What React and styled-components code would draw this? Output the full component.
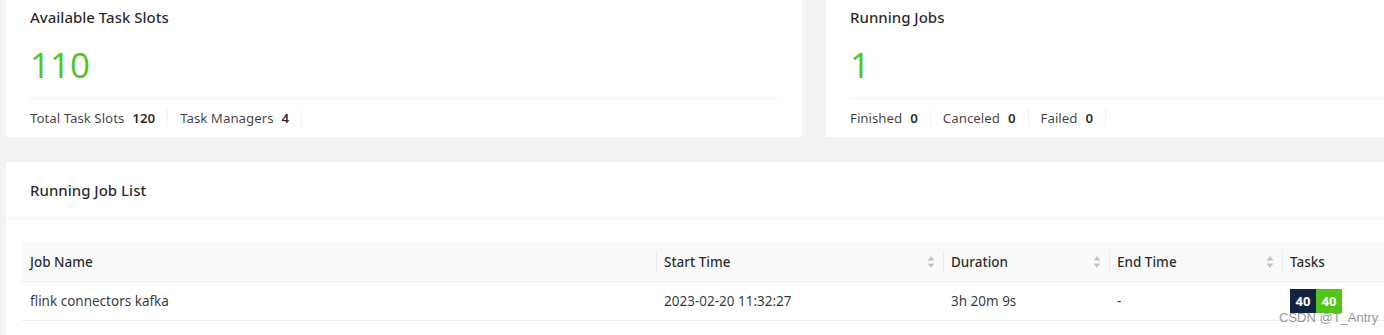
import React from "react";
import styled, { createGlobalStyle } from "styled-components";

const GlobalStyle = createGlobalStyle`
  html, body {
    margin: 0;
    padding: 0;
    background: #f2f2f2;
    overflow: hidden;
  }
  body {
    font-family: "Noto Sans", "Open Sans", sans-serif;
    color: rgba(0, 0, 0, 0.85);
    font-size: 14px;
  }
`;

const Page = styled.div`
  position: relative;
  width: 1616px;
  padding: 0 0 0 6px;
  display: flex;
  flex-direction: column;
  gap: 25px;
  height: 335px;
  overflow: hidden;
`;

const TopRow = styled.div`
  display: grid;
  grid-template-columns: 796px 796px;
  gap: 24px;
`;

const Card = styled.section`
  background: #fff;
`;

const StatBody = styled.div`
  padding: 6px 24px 0;
  height: 137px;
  box-sizing: border-box;
  display: flex;
  flex-direction: column;
`;

const StatTitle = styled.div`
  font-size: 15px;
  line-height: 22px;
  font-weight: 500;
  color: rgba(0, 0, 0, 0.85);
`;

const StatValue = styled.div`
  font-size: 35px;
  line-height: 52px;
  margin-top: 11px;
  color: #52c41a;
  font-family: "Open Sans", "Noto Sans", sans-serif;
  padding-bottom: 7px;
  border-bottom: 1px solid #eeeeee;
`;

const StatFooter = styled.div`
  display: flex;
  align-items: center;
  height: 40px;
`;

const Meta = styled.span`
  display: inline-flex;
  align-items: center;
  gap: 8px;
  font-size: 13.3px;
  color: rgba(0, 0, 0, 0.75);
  padding: 0 12px;
  border-right: 1px solid #f2f2f2;
  line-height: 18px;
  &:first-child {
    padding-left: 0;
  }
  b {
    font-weight: 600;
    color: rgba(0, 0, 0, 0.85);
  }
`;

const CardHead = styled.div`
  height: 57px;
  display: flex;
  align-items: center;
  padding: 0 24px;
  border-bottom: 1px solid #eeeeee;
  font-size: 15px;
  font-weight: 500;
  box-sizing: border-box;
`;

const CardBody = styled.div`
  padding: 24px 16px 24px;
`;

const Table = styled.table`
  width: 100%;
  border-collapse: collapse;
  table-layout: fixed;
  font-size: 13.5px;
`;

const Th = styled.th`
  position: relative;
  box-sizing: border-box;
  background: #fafafa;
  text-align: left;
  font-weight: 500;
  height: 38px;
  padding: 0 8px;
  border-bottom: 1px solid #f0f0f0;
  color: rgba(0, 0, 0, 0.85);
  width: ${(p) => p.$w || "auto"};
  &:not(:first-child)::before {
    content: "";
    position: absolute;
    left: 0;
    top: 50%;
    width: 1px;
    height: 22px;
    transform: translateY(-50%);
    background: #ececec;
  }
`;

const ThInner = styled.div`
  display: flex;
  align-items: center;
  justify-content: space-between;
`;

const Td = styled.td`
  height: 38px;
  padding: 0 8px;
  border-bottom: 1px solid #f0f0f0;
  color: rgba(0, 0, 0, 0.8);
`;

const Badges = styled.div`
  display: flex;
`;

const Badge = styled.span`
  display: inline-flex;
  align-items: center;
  justify-content: center;
  width: 26px;
  height: 24px;
  background: ${(p) => p.$bg};
  color: #fff;
  font-weight: 700;
  font-size: 13px;
`;

const Watermark = styled.div`
  position: absolute;
  left: 1279px;
  top: 310px;
  font-family: "Liberation Sans", Arial, sans-serif;
  font-size: 13px;
  color: rgba(130, 130, 130, 0.85);
`;

const Sorter = () => (
  <svg width="8" height="14" viewBox="0 0 8 14">
    <path d="M4 1 L7.5 5.5 L0.5 5.5 Z" fill="#c4c4c4" />
    <path d="M4 13 L7.5 8.5 L0.5 8.5 Z" fill="#c4c4c4" />
  </svg>
);

const Stat = ({ title, value, items }) => (
  <Card>
    <StatBody>
      <StatTitle>{title}</StatTitle>
      <StatValue>{value}</StatValue>
      <StatFooter>
        {items.map(([k, v]) => (
          <Meta key={k}>
            {k} <b>{v}</b>
          </Meta>
        ))}
      </StatFooter>
    </StatBody>
  </Card>
);

const App = () => (
  <>
    <GlobalStyle />
    <Page>
      <TopRow>
        <Stat
          title="Available Task Slots"
          value="110"
          items={[
            ["Total Task Slots", 120],
            ["Task Managers", 4],
          ]}
        />
        <Stat
          title="Running Jobs"
          value="1"
          items={[
            ["Finished", 0],
            ["Canceled", 0],
            ["Failed", 0],
          ]}
        />
      </TopRow>
      <Card>
        <CardHead>Running Job List</CardHead>
        <CardBody>
          <Table>
            <thead>
              <tr>
                <Th $w="634px">Job Name</Th>
                <Th $w="287px">
                  <ThInner>
                    Start Time <Sorter />
                  </ThInner>
                </Th>
                <Th $w="166px">
                  <ThInner>
                    Duration <Sorter />
                  </ThInner>
                </Th>
                <Th $w="173px">
                  <ThInner>
                    End Time <Sorter />
                  </ThInner>
                </Th>
                <Th>Tasks</Th>
              </tr>
            </thead>
            <tbody>
              <tr>
                <Td>flink connectors kafka</Td>
                <Td>2023-02-20 11:32:27</Td>
                <Td>3h 20m 9s</Td>
                <Td>-</Td>
                <Td>
                  <Badges>
                    <Badge $bg="#13233f">40</Badge>
                    <Badge $bg="#52c41a">40</Badge>
                  </Badges>
                </Td>
              </tr>
            </tbody>
          </Table>
        </CardBody>
      </Card>
      <Watermark>CSDN @T_Antry</Watermark>
    </Page>
  </>
);

export default App;
